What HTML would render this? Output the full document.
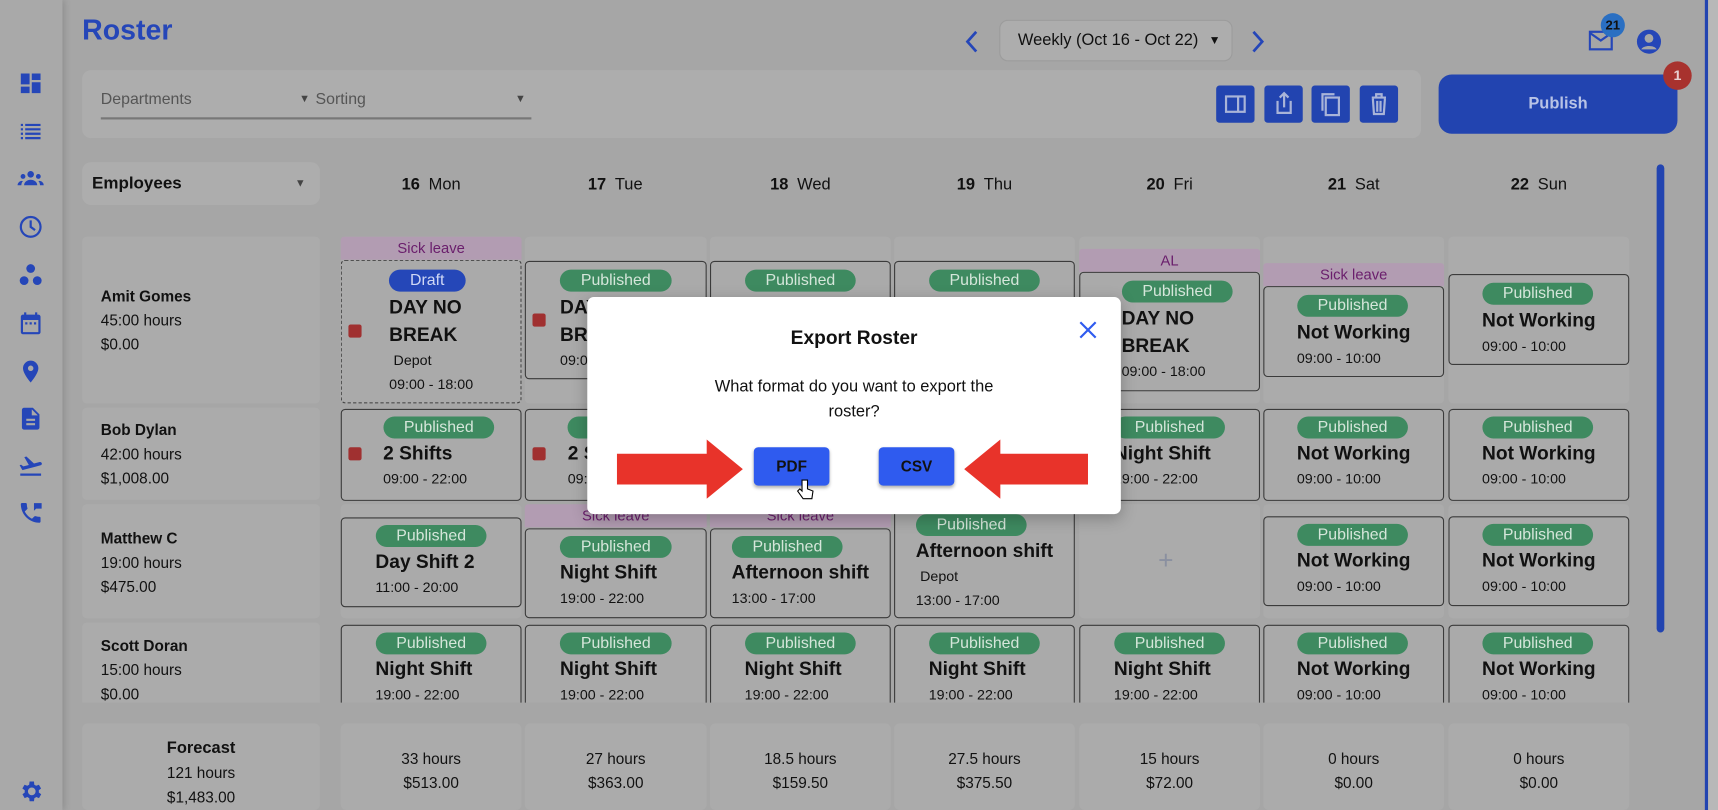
<!DOCTYPE html>
<html><head><meta charset="utf-8"><style>
*{box-sizing:border-box;margin:0;padding:0}
html,body{width:1718px;height:810px;overflow:hidden;background:#a7a7a7}
#w{position:absolute;left:0;top:0;width:1568px;height:739px;transform:scale(1.09566,1.0961);transform-origin:0 0;font-family:"Liberation Sans",sans-serif;color:#111;background:#a6a6a6}
.a{position:absolute}
.sb{left:0;top:0;width:57px;height:739px;background:#a9a9a9;box-shadow:2px 0 6px rgba(0,0,0,.15)}
.ic{position:absolute;left:16px;width:24px;height:24px}
.pn{background:#adadad;border-radius:8px}
.cell{position:absolute;background:#ababab;border-radius:4px}
.c{position:absolute;border:1.5px solid #3b3b3b;border-radius:4px;text-align:center;background:#aaaaaa}
.in{display:inline-block;text-align:left}
.p{display:inline-block;background:#3e8a60;color:#d5e6da;border-radius:10px;padding:0 19px;height:20px;line-height:20px;font-size:14.5px}
.d{background:#2547b8;color:#d0d8f5}
.t{font-weight:bold;font-size:17.5px;line-height:25px;color:#111;white-space:nowrap}
.tm{font-size:13px;line-height:22px;white-space:nowrap}
.sl{position:absolute;height:21px;background:#b29cb2;color:#6a1e6c;font-size:13.5px;text-align:center;line-height:21px;border-radius:3px 3px 0 0}
.rs{position:absolute;left:6px;width:12px;height:12px;background:#a03030;border-radius:2px}
.dh{position:absolute;top:160px;width:165px;text-align:center;font-size:15px}
.dh b{margin-right:8px}
.em{position:absolute;left:92px;font-size:14px;line-height:22px}
.btn{position:absolute;top:78px;width:35px;height:34px;background:#2244b0;border-radius:3px}
.fc{position:absolute;top:660px;height:79px;text-align:center;font-size:14px;line-height:22px;padding-top:21px;background:#ababab;border-radius:5px}
</style></head><body><div id="w">
<div class="a sb"></div>
<svg class="ic" style="top:64px" viewBox="0 0 24 24" fill="#2546b8"><path d="M3 13h8V3H3zm0 8h8v-6H3zm10 0h8V11h-8zm0-18v6h8V3z"/></svg>
<svg class="ic" style="top:108px" viewBox="0 0 24 24" fill="#2546b8"><path d="M3 5h2v2H3zm4 0h14v2H7zM3 9h2v2H3zm4 0h14v2H7zm-4 4h2v2H3zm4 0h14v2H7zm-4 4h2v2H3zm4 0h14v2H7z"/></svg>
<svg class="ic" style="top:151px" viewBox="0 0 24 24" fill="#2546b8"><circle cx="12" cy="8" r="3"/><circle cx="5" cy="10" r="2.2"/><circle cx="19" cy="10" r="2.2"/><path d="M6 18c0-3 3-5 6-5s6 2 6 5zM0 18c0-2 2-4 4-4l1 .2C4 15 3.5 16.5 3.5 18zm24 0c0-2-2-4-4-4l-1 .2c1 .8 1.5 2.3 1.5 3.8z"/></svg>
<svg class="ic" style="top:195px" viewBox="0 0 24 24" fill="none" stroke="#2546b8" stroke-width="2"><circle cx="12" cy="12" r="9"/><path d="M12 6v6l4 3"/></svg>
<svg class="ic" style="top:239px" viewBox="0 0 24 24" fill="#2546b8"><circle cx="12" cy="6" r="4"/><circle cx="6" cy="17" r="4"/><circle cx="18" cy="17" r="4"/></svg>
<svg class="ic" style="top:283px" viewBox="0 0 24 24" fill="#2546b8"><path d="M19 4h-1V2h-2v2H8V2H6v2H5a2 2 0 00-2 2v14a2 2 0 002 2h14a2 2 0 002-2V6a2 2 0 00-2-2zm0 16H5V9h14z"/><path d="M7 11h2v2H7zm4 0h2v2h-2zm4 0h2v2h-2z"/></svg>
<svg class="ic" style="top:327px" viewBox="0 0 24 24" fill="#2546b8"><path d="M12 2a7 7 0 00-7 7c0 5 7 13 7 13s7-8 7-13a7 7 0 00-7-7zm0 9.5A2.5 2.5 0 1112 6.5a2.5 2.5 0 010 5z"/></svg>
<svg class="ic" style="top:370px" viewBox="0 0 24 24" fill="#2546b8"><path d="M14 2H6a2 2 0 00-2 2v16a2 2 0 002 2h12a2 2 0 002-2V8zm2 16H8v-2h8zm0-4H8v-2h8zm-3-5V3.5L18.5 9z"/></svg>
<svg class="ic" style="top:413px" viewBox="0 0 24 24" fill="#2546b8"><path d="M2.5 19h19v2h-19zm19.6-9.4c-.2-.8-1-1.3-1.8-1.1L15 9.9 8.1 3.5l-1.9.5 4.1 7.2-5 1.3-2-1.5-1.4.4 1.8 3.2.8 1.3 1.6-.4 5.3-1.4 4.4-1.2 5.3-1.4c.8-.3 1.3-1.1 1.1-1.9z"/></svg>
<svg class="ic" style="top:456px" viewBox="0 0 24 24" fill="#2546b8"><path d="M20 15.5c-1.2 0-2.5-.2-3.6-.6-.3-.1-.7 0-1 .2l-2.2 2.2c-2.8-1.4-5.1-3.8-6.6-6.6l2.2-2.2c.3-.3.4-.7.2-1-.3-1.1-.5-2.4-.5-3.6 0-.5-.4-1-1-1H4c-.5 0-1 .5-1 1 0 9.4 7.6 17 17 17 .5 0 1-.5 1-1v-3.5c0-.5-.5-.9-1-.9zM15 3v7l2-2h5V3z"/></svg>
<svg class="ic" style="top:710px" viewBox="0 0 24 24" fill="#2546b8"><path d="M19.4 13a7.5 7.5 0 000-2l2.1-1.6-2-3.5-2.5 1a7 7 0 00-1.7-1L15 3h-4l-.4 2.9a7 7 0 00-1.7 1l-2.5-1-2 3.5L6.6 11a7.5 7.5 0 000 2l-2.1 1.6 2 3.5 2.5-1a7 7 0 001.7 1L11 21h4l.4-2.9a7 7 0 001.7-1l2.5 1 2-3.5zM13 15.5a3.5 3.5 0 110-7 3.5 3.5 0 010 7z"/></svg>

<div class="a" style="left:75px;top:12px;font-size:26px;font-weight:bold;color:#2546b8">Roster</div>
<svg class="a" style="left:880px;top:27px" width="14" height="22" viewBox="0 0 14 22"><path d="M11 2L3 11l8 9" fill="none" stroke="#2546b8" stroke-width="2.5"/></svg>
<svg class="a" style="left:1141px;top:27px" width="14" height="22" viewBox="0 0 14 22"><path d="M3 2l8 9-8 9" fill="none" stroke="#2546b8" stroke-width="2.5"/></svg>
<div class="a pn" style="left:912px;top:18px;width:213px;height:38px;border:1px solid #9c9c9c;border-radius:8px;font-size:15px;line-height:36px;padding-left:16px">Weekly (Oct 16 - Oct 22) <span style="position:absolute;right:10px;font-size:11px">&#9660;</span></div>
<svg class="a" style="left:1450px;top:26px" width="24" height="22" viewBox="0 0 24 22"><rect x="1" y="3" width="20" height="16" fill="none" stroke="#2546b8" stroke-width="2"/><path d="M1 4l10 7 10-7" fill="none" stroke="#2546b8" stroke-width="2"/></svg>
<div class="a" style="left:1461px;top:12px;width:22px;height:22px;border-radius:11px;background:#2a6fc2;color:#111;font-size:12px;font-weight:bold;text-align:center;line-height:22px">21</div>
<svg class="a" style="left:1493px;top:26px" width="24" height="24" viewBox="0 0 24 24"><circle cx="12" cy="12" r="11" fill="#2546b8"/><circle cx="12" cy="9" r="4" fill="#a6a6a6"/><path d="M5 19c2-4 12-4 14 0" fill="#a6a6a6"/></svg>

<div class="a pn" style="left:75px;top:64px;width:1222px;height:62px"></div>
<div class="a" style="left:92px;top:83px;font-size:14.5px;color:#555">Departments</div>
<div class="a" style="left:273px;top:85px;font-size:10px;color:#444">&#9660;</div>
<div class="a" style="left:288px;top:83px;font-size:14.5px;color:#555">Sorting</div>
<div class="a" style="left:470px;top:85px;font-size:10px;color:#444">&#9660;</div>
<div class="a" style="left:92px;top:107px;width:393px;height:1.5px;background:#777"></div>
<div class="btn" style="left:1110px"><svg width="35" height="34" viewBox="0 0 35 34"><rect x="9" y="10" width="17" height="14" fill="none" stroke="#a9b4d8" stroke-width="2"/><path d="M20 10v14" stroke="#a9b4d8" stroke-width="2"/></svg></div>
<div class="btn" style="left:1154px"><svg width="35" height="34" viewBox="0 0 35 34"><path d="M12 14v11h12V14M18 20V7m-4 4l4-4 4 4" fill="none" stroke="#a9b4d8" stroke-width="2"/></svg></div>
<div class="btn" style="left:1197px"><svg width="35" height="34" viewBox="0 0 35 34"><rect x="13" y="11" width="12" height="16" fill="none" stroke="#a9b4d8" stroke-width="2"/><path d="M10 23V8h11" fill="none" stroke="#a9b4d8" stroke-width="2"/></svg></div>
<div class="btn" style="left:1241px"><svg width="35" height="34" viewBox="0 0 35 34"><path d="M11 11h13M15 11V8h5v3M12 12l1 14h9l1-14M16 14v10m3-10v10" fill="none" stroke="#a9b4d8" stroke-width="2"/></svg></div>
<div class="a" style="left:1313px;top:68px;width:218px;height:54px;background:#2244b0;border-radius:12px;color:#b8c3e6;font-weight:bold;font-size:15px;text-align:center;line-height:54px">Publish</div>
<div class="a" style="left:1518px;top:56px;width:26px;height:26px;border-radius:13px;background:#a8322e;color:#e8d0d0;font-weight:bold;font-size:13px;text-align:center;line-height:26px">1</div>

<div class="a pn" style="left:75px;top:148px;width:217px;height:39px;font-weight:bold;font-size:15.5px;line-height:39px;padding-left:9px">Employees<span style="position:absolute;right:13px;font-size:10px;color:#444">&#9660;</span></div>
<div class="dh" style="left:311px"><b>16</b>Mon</div>
<div class="dh" style="left:479px"><b>17</b>Tue</div>
<div class="dh" style="left:648px"><b>18</b>Wed</div>
<div class="dh" style="left:816px"><b>19</b>Thu</div>
<div class="dh" style="left:985px"><b>20</b>Fri</div>
<div class="dh" style="left:1153px"><b>21</b>Sat</div>
<div class="dh" style="left:1322px"><b>22</b>Sun</div>
<div class="a" style="left:1512px;top:150px;width:7px;height:427px;background:#2244b0;border-radius:4px"></div>
<div class="a" style="left:1556px;top:0;width:3px;height:739px;background:#2244b0"></div>
<div class="a" style="left:1559px;top:0;width:9px;height:739px;background:#b8b8b8"></div>

<div class="a" style="left:0;top:0;width:1568px;height:641px;overflow:hidden">
<div class="cell" style="left:75px;top:216px;width:217px;height:152px"></div>
<div class="cell" style="left:75px;top:372px;width:217px;height:84px"></div>
<div class="cell" style="left:75px;top:460px;width:217px;height:104px"></div>
<div class="cell" style="left:75px;top:568px;width:217px;height:80px"></div>
<div class="em" style="top:259px"><b>Amit Gomes</b><br>45:00 hours<br>$0.00</div>
<div class="em" style="top:381px"><b>Bob Dylan</b><br>42:00 hours<br>$1,008.00</div>
<div class="em" style="top:480px"><b>Matthew C</b><br>19:00 hours<br>$475.00</div>
<div class="em" style="top:578px"><b>Scott Doran</b><br>15:00 hours<br>$0.00</div>

<div class="cell" style="left:311px;top:216px;width:165px;height:152px"></div>
<div class="cell" style="left:479px;top:216px;width:166px;height:152px"></div>
<div class="cell" style="left:648px;top:216px;width:165px;height:152px"></div>
<div class="cell" style="left:816px;top:216px;width:165px;height:152px"></div>
<div class="cell" style="left:985px;top:216px;width:165px;height:152px"></div>
<div class="cell" style="left:1153px;top:216px;width:165px;height:152px"></div>
<div class="cell" style="left:1322px;top:216px;width:165px;height:152px"></div>
<div class="cell" style="left:311px;top:460px;width:165px;height:104px"></div>
<div class="cell" style="left:985px;top:460px;width:165px;height:104px"></div>
<div class="cell" style="left:1153px;top:460px;width:165px;height:104px"></div>
<div class="cell" style="left:1322px;top:460px;width:165px;height:104px"></div>

<div class="sl" style="left:311px;top:216px;width:165px">Sick leave</div>
<div class="c" style="left:311px;top:237px;width:165px;height:131px;border:1px dashed #444;padding-top:8px"><div class="rs" style="top:58px"></div><div class="in"><span class="p d">Draft</span><div class="t" style="margin-top:2px">DAY NO</div><div class="t">BREAK</div><div class="tm" style="margin-left:4px">Depot</div><div class="tm">09:00 - 18:00</div></div></div>
<div class="c" style="left:479px;top:238px;width:166px;height:108px;padding-top:7px"><div class="rs" style="top:47px"></div><div class="in"><span class="p">Published</span><div class="t" style="margin-top:2px">DAY NO</div><div class="t">BREAK</div><div class="tm">09:00 - 18:00</div></div></div>
<div class="c" style="left:648px;top:238px;width:165px;height:108px;padding-top:7px"><div class="in"><span class="p">Published</span><div class="t">DAY NO</div></div></div>
<div class="c" style="left:816px;top:238px;width:165px;height:108px;padding-top:7px"><div class="in"><span class="p">Published</span><div class="t">DAY NO</div></div></div>
<div class="sl" style="left:985px;top:227px;width:165px">AL</div>
<div class="c" style="left:985px;top:248px;width:165px;height:109px;padding-top:7px"><div class="in" style="margin-left:14px"><span class="p">Published</span><div class="t" style="margin-top:2px">DAY NO</div><div class="t">BREAK</div><div class="tm">09:00 - 18:00</div></div></div>
<div class="sl" style="left:1153px;top:240px;width:165px">Sick leave</div>
<div class="c" style="left:1153px;top:261px;width:165px;height:83px;padding-top:7px"><div class="in"><span class="p">Published</span><div class="t" style="margin-top:2px">Not Working</div><div class="tm">09:00 - 10:00</div></div></div>
<div class="c" style="left:1322px;top:250px;width:165px;height:83px;padding-top:7px"><div class="in"><span class="p">Published</span><div class="t" style="margin-top:2px">Not Working</div><div class="tm">09:00 - 10:00</div></div></div>

<div class="c" style="left:311px;top:373px;width:165px;height:84px;padding-top:6px"><div class="rs" style="top:34px"></div><div class="in" style="margin-left:14px"><span class="p">Published</span><div class="t" style="margin-top:1px">2 Shifts</div><div class="tm">09:00 - 22:00</div></div></div>
<div class="c" style="left:479px;top:373px;width:166px;height:84px;padding-top:6px"><div class="rs" style="top:34px"></div><div class="in" style="margin-left:14px"><span class="p">Published</span><div class="t" style="margin-top:1px">2 Shifts</div><div class="tm">09:00 - 22:00</div></div></div>
<div class="c" style="left:648px;top:373px;width:165px;height:84px"></div>
<div class="c" style="left:816px;top:373px;width:165px;height:84px"></div>
<div class="c" style="left:985px;top:373px;width:165px;height:84px;padding-top:6px"><div class="in"><span class="p">Published</span><div class="t" style="margin-top:1px">Night Shift</div><div class="tm">19:00 - 22:00</div></div></div>
<div class="c" style="left:1153px;top:373px;width:165px;height:84px;padding-top:6px"><div class="in"><span class="p">Published</span><div class="t" style="margin-top:1px">Not Working</div><div class="tm">09:00 - 10:00</div></div></div>
<div class="c" style="left:1322px;top:373px;width:165px;height:84px;padding-top:6px"><div class="in"><span class="p">Published</span><div class="t" style="margin-top:1px">Not Working</div><div class="tm">09:00 - 10:00</div></div></div>

<div class="c" style="left:311px;top:472px;width:165px;height:82px;padding-top:6px"><div class="in"><span class="p">Published</span><div class="t" style="margin-top:1px">Day Shift 2</div><div class="tm">11:00 - 20:00</div></div></div>
<div class="sl" style="left:479px;top:460px;width:166px">Sick leave</div>
<div class="c" style="left:479px;top:482px;width:166px;height:82px;padding-top:6px"><div class="in"><span class="p">Published</span><div class="t" style="margin-top:1px">Night Shift</div><div class="tm">19:00 - 22:00</div></div></div>
<div class="sl" style="left:648px;top:460px;width:165px">Sick leave</div>
<div class="c" style="left:648px;top:482px;width:165px;height:82px;padding-top:6px"><div class="in"><span class="p">Published</span><div class="t" style="margin-top:1px">Afternoon shift</div><div class="tm">13:00 - 17:00</div></div></div>
<div class="c" style="left:816px;top:458px;width:165px;height:106px;padding-top:10px"><div class="in"><span class="p">Published</span><div class="t" style="margin-top:1px">Afternoon shift</div><div class="tm" style="margin-left:4px">Depot</div><div class="tm">13:00 - 17:00</div></div></div>
<div class="a" style="left:1057px;top:498px;font-size:24px;color:#8a90a0">+</div>
<div class="c" style="left:1153px;top:471px;width:165px;height:82px;padding-top:6px"><div class="in"><span class="p">Published</span><div class="t" style="margin-top:1px">Not Working</div><div class="tm">09:00 - 10:00</div></div></div>
<div class="c" style="left:1322px;top:471px;width:165px;height:82px;padding-top:6px"><div class="in"><span class="p">Published</span><div class="t" style="margin-top:1px">Not Working</div><div class="tm">09:00 - 10:00</div></div></div>

<div class="c" style="left:311px;top:570px;width:165px;height:90px;padding-top:6px"><div class="in"><span class="p">Published</span><div class="t" style="margin-top:1px">Night Shift</div><div class="tm">19:00 - 22:00</div></div></div>
<div class="c" style="left:479px;top:570px;width:166px;height:90px;padding-top:6px"><div class="in"><span class="p">Published</span><div class="t" style="margin-top:1px">Night Shift</div><div class="tm">19:00 - 22:00</div></div></div>
<div class="c" style="left:648px;top:570px;width:165px;height:90px;padding-top:6px"><div class="in"><span class="p">Published</span><div class="t" style="margin-top:1px">Night Shift</div><div class="tm">19:00 - 22:00</div></div></div>
<div class="c" style="left:816px;top:570px;width:165px;height:90px;padding-top:6px"><div class="in"><span class="p">Published</span><div class="t" style="margin-top:1px">Night Shift</div><div class="tm">19:00 - 22:00</div></div></div>
<div class="c" style="left:985px;top:570px;width:165px;height:90px;padding-top:6px"><div class="in"><span class="p">Published</span><div class="t" style="margin-top:1px">Night Shift</div><div class="tm">19:00 - 22:00</div></div></div>
<div class="c" style="left:1153px;top:570px;width:165px;height:90px;padding-top:6px"><div class="in"><span class="p">Published</span><div class="t" style="margin-top:1px">Not Working</div><div class="tm">09:00 - 10:00</div></div></div>
<div class="c" style="left:1322px;top:570px;width:165px;height:90px;padding-top:6px"><div class="in"><span class="p">Published</span><div class="t" style="margin-top:1px">Not Working</div><div class="tm">09:00 - 10:00</div></div></div>
</div>

<div class="fc" style="left:75px;width:217px;padding-top:11px"><b style="font-size:15px">Forecast</b><br>121 hours<br>$1,483.00</div>
<div class="fc" style="left:311px;width:165px">33 hours<br>$513.00</div>
<div class="fc" style="left:479px;width:166px">27 hours<br>$363.00</div>
<div class="fc" style="left:648px;width:165px">18.5 hours<br>$159.50</div>
<div class="fc" style="left:816px;width:165px">27.5 hours<br>$375.50</div>
<div class="fc" style="left:985px;width:165px">15 hours<br>$72.00</div>
<div class="fc" style="left:1153px;width:165px">0 hours<br>$0.00</div>
<div class="fc" style="left:1322px;width:165px">0 hours<br>$0.00</div>

<div class="a" style="left:536px;top:271px;width:487px;height:198px;background:#fff;border-radius:6px;box-shadow:0 4px 14px rgba(0,0,0,.25)">
<div class="a" style="left:0;top:27px;width:487px;text-align:center;font-weight:bold;font-size:17.5px">Export Roster</div>
<svg class="a" style="left:449px;top:22px" width="16" height="16" viewBox="0 0 16 16"><path d="M1 1l14 14M15 1L1 15" stroke="#2f5bef" stroke-width="2"/></svg>
<div class="a" style="left:60px;top:70px;width:367px;text-align:center;font-size:15px;line-height:23px">What format do you want to export the<br>roster?</div>
<div class="a" style="left:152px;top:137px;width:69px;height:35px;background:#2f5bef;border-radius:4px;box-shadow:0 2px 3px rgba(0,0,0,.3);text-align:center;line-height:35px;font-weight:bold;font-size:14px">PDF</div>
<div class="a" style="left:266px;top:137px;width:69px;height:35px;background:#2f5bef;border-radius:4px;box-shadow:0 2px 3px rgba(0,0,0,.3);text-align:center;line-height:35px;font-weight:bold;font-size:14px">CSV</div>
<svg class="a" style="left:27px;top:130px" width="116" height="54" viewBox="0 0 116 54"><path d="M0 13h82V0l33 27-33 27V41H0z" fill="#e8332a"/></svg>
<svg class="a" style="left:344px;top:130px" width="113" height="54" viewBox="0 0 113 54"><path d="M113 13H33V0L0 27l33 27V41h80z" fill="#e8332a"/></svg>
<svg class="a" style="left:191px;top:166px" width="16" height="20" viewBox="0 0 16 20"><path d="M5 1v10l-2-2-2 2 5 7h8l1-7-5-2V1z" fill="#fff" stroke="#000" stroke-width="1"/></svg>
</div>
</div></body></html>
